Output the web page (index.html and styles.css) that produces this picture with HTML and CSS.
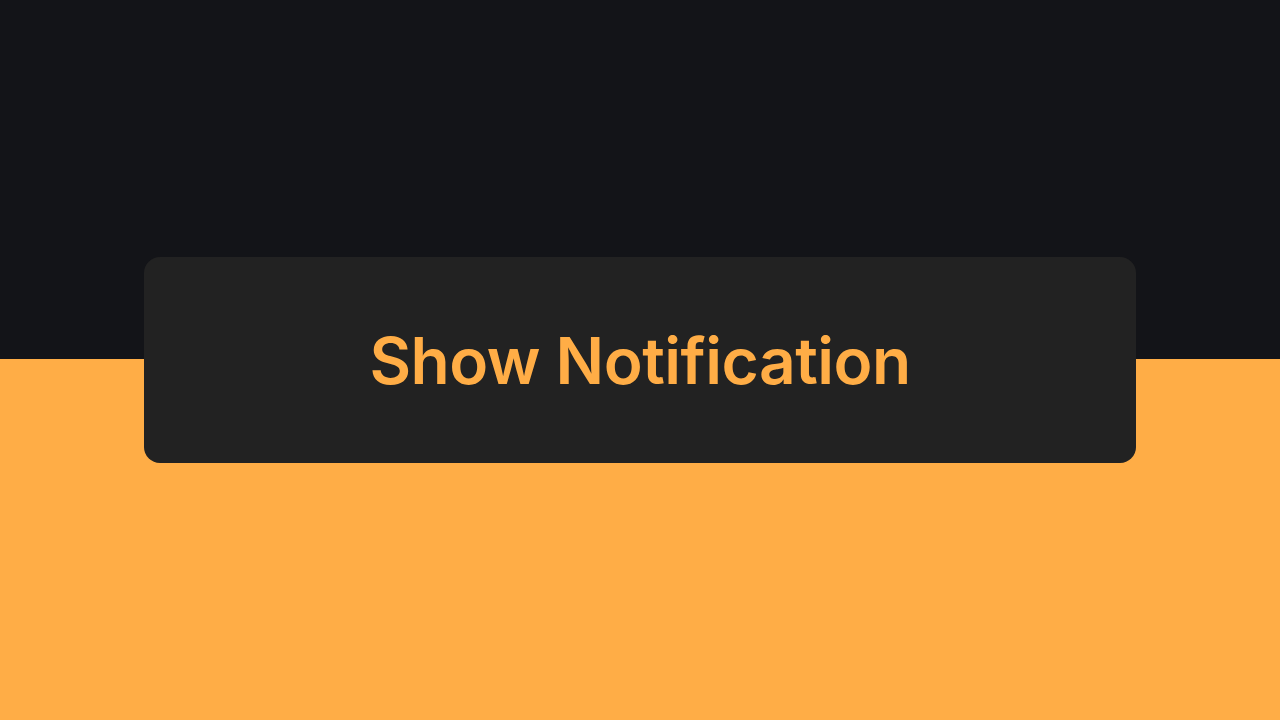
FILE: index.html
```html
<!DOCTYPE html>
<html lang="en">
<head>
<meta charset="utf-8">
<title>Show Notification</title>
<link rel="stylesheet" href="styles.css">
</head>
<body>
  <main class="stage">
    <button class="notify-btn" type="button">Show Notification</button>
  </main>
</body>
</html>
```

FILE: styles.css
```css
* {
  box-sizing: border-box;
}

html,
body {
  margin: 0;
  height: 100%;
}

body {
  background: linear-gradient(to bottom, #131418 0, #131418 359px, #ffad46 359px, #ffad46 100%);
  font-family: "Inter", "Noto Sans", sans-serif;
}

.stage {
  height: 100%;
  display: flex;
  align-items: center;
  justify-content: center;
}

.notify-btn {
  width: 992px;
  height: 206px;
  border: none;
  border-radius: 16px;
  background: #222222;
  color: #ffad46;
  font-family: inherit;
  font-size: 64px;
  font-weight: 600;
  letter-spacing: -0.5px;
  cursor: pointer;
  padding: 0;
  margin: 0;
}
```
